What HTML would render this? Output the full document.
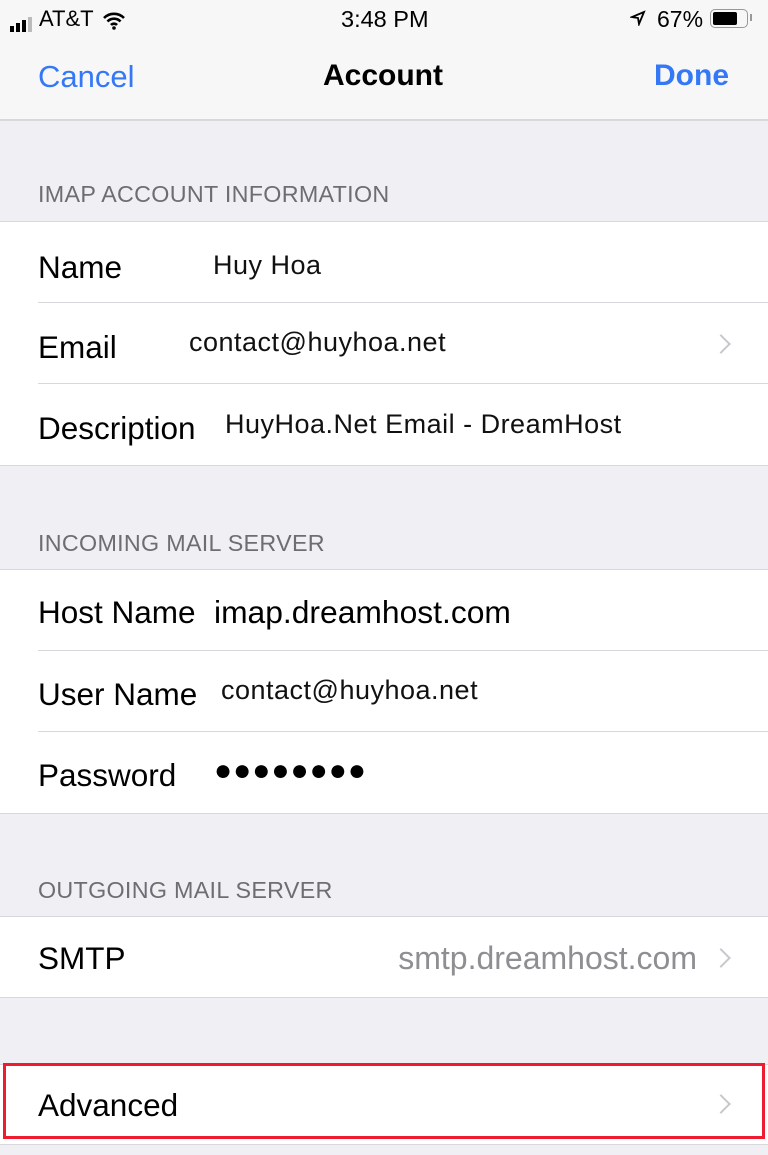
<!DOCTYPE html><html><head><style>
body{margin:0;width:768px;height:1155px;background:#efeff4;font-family:"Liberation Sans",sans-serif;position:relative;overflow:hidden}
.a{position:absolute}
.nav{left:0;top:0;width:768px;height:119px;background:#f7f7f7;border-bottom:2px solid #d8d8dc}
.hdr{left:38px;font-size:23.3px;color:#6d6d72;letter-spacing:.3px}
.grp{left:0;width:768px;background:#fff;border-top:1px solid #d8d8dc;border-bottom:1px solid #d8d8dc}
.sep{left:38px;right:0;height:1px;background:#d8d8dc}
.lbl{left:38px;font-size:31.5px;color:#000}
.val{font-size:27px;color:#111;letter-spacing:.5px}
.chev{position:absolute;right:40px;width:12px;height:12px;border-right:2.5px solid #c7c7cc;border-top:2.5px solid #c7c7cc;transform:rotate(45deg)}
</style></head><body>
<div class="a nav"></div>
<div class="a" style="left:10px;top:6px;font-size:22px;display:flex;align-items:flex-end;gap:2px">
<span style="width:4px;height:6px;background:#000;display:inline-block"></span><span style="width:4px;height:9px;background:#000;display:inline-block"></span><span style="width:4px;height:12px;background:#000;display:inline-block"></span><span style="width:4px;height:15px;background:#bbb;display:inline-block"></span>
<span style="margin-left:5px">AT&amp;T</span>
<svg width="24" height="18" viewBox="0 0 24 18" style="margin-left:6px;margin-bottom:2px"><path d="M2 6a14 14 0 0 1 20 0M5.5 9.5a9 9 0 0 1 13 0M9 13a4 4 0 0 1 6 0" stroke="#000" stroke-width="2.6" fill="none"/><circle cx="12" cy="16" r="1.8"/></svg></div>
<div class="a" style="left:341px;top:6px;font-size:23.5px">3:48 PM</div>
<svg class="a" style="left:630px;top:10px" width="16" height="16" viewBox="0 0 16 16"><path d="M14 2L2 7l6 1 1 6z" fill="none" stroke="#000" stroke-width="1.8"/></svg>
<div class="a" style="left:657px;top:6px;font-size:23px">67%</div>
<div class="a" style="left:710px;top:9px;width:36px;height:17px;border:1.5px solid #999;border-radius:5px"><div style="margin:2px;width:24px;height:13px;background:#000;border-radius:2px"></div></div>
<div class="a" style="left:750px;top:14px;width:2px;height:7px;background:#999"></div>
<div class="a" style="left:38px;top:59px;font-size:31px;color:#3478f6">Cancel</div>
<div class="a" style="left:323px;top:59px;font-size:30px;font-weight:bold;color:#000">Account</div>
<div class="a" style="left:654px;top:59px;font-size:30px;font-weight:bold;color:#3478f6">Done</div>

<div class="a hdr" style="top:181px">IMAP ACCOUNT INFORMATION</div>
<div class="a grp" style="top:221px;height:243px">
<div class="a lbl" style="top:27px">Name</div><div class="a val" style="left:213px;top:28px">Huy Hoa</div>
<div class="a sep" style="top:80px"></div>
<div class="a lbl" style="top:107px">Email</div><div class="a val" style="left:189px;top:105px">contact@huyhoa.net</div><div class="chev" style="top:115px"></div>
<div class="a sep" style="top:161px"></div>
<div class="a lbl" style="top:188px">Description</div><div class="a val" style="left:225px;top:187px">HuyHoa.Net Email - DreamHost</div>
</div>
<div class="a hdr" style="top:530px">INCOMING MAIL SERVER</div>
<div class="a grp" style="top:569px;height:243px">
<div class="a lbl" style="top:24px">Host Name</div><div class="a" style="left:214px;top:24px;font-size:31.8px">imap.dreamhost.com</div>
<div class="a sep" style="top:80px"></div>
<div class="a lbl" style="top:106px">User Name</div><div class="a val" style="left:221px;top:105px">contact@huyhoa.net</div>
<div class="a sep" style="top:161px"></div>
<div class="a lbl" style="top:187px">Password</div><div class="a" style="left:214px;top:184px;font-size:30px;letter-spacing:1px">●●●●●●●●</div>
</div>
<div class="a hdr" style="top:877px">OUTGOING MAIL SERVER</div>
<div class="a grp" style="top:916px;height:80px">
<div class="a lbl" style="top:23px">SMTP</div><div class="a" style="right:71px;top:23px;font-size:32px;color:#8e8e93">smtp.dreamhost.com</div><div class="chev" style="top:34px"></div>
</div>
<div class="a grp" style="top:1064px;height:79px">
<div class="a lbl" style="top:22px">Advanced</div><div class="chev" style="top:32px"></div>
</div>
<div class="a" style="left:3px;top:1063px;width:756px;height:70px;border:3px solid #ee1c2e"></div>
</body></html>
